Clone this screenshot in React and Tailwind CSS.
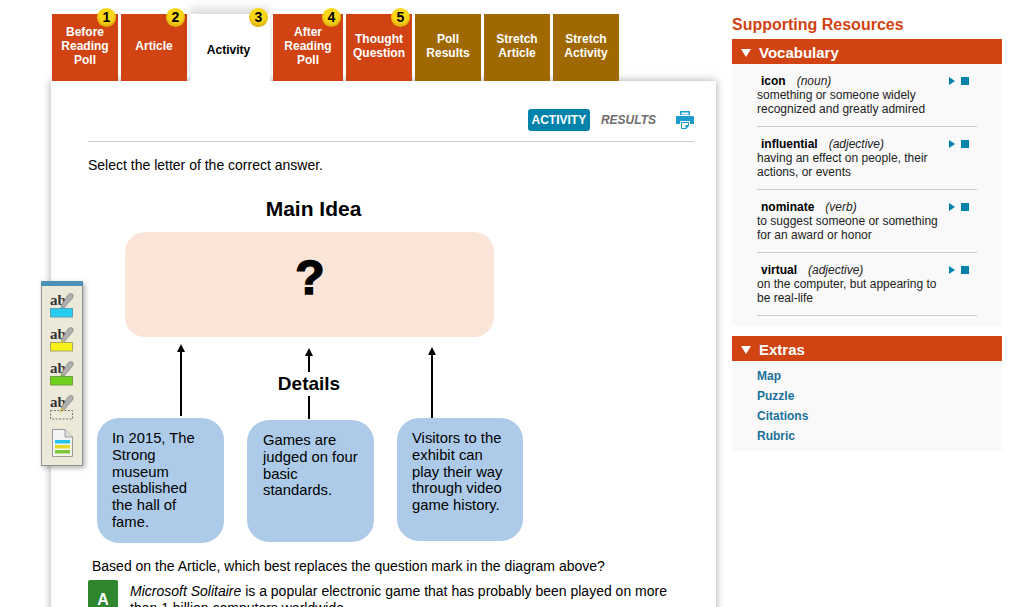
const tabs = [
  { label: ["Before", "Reading", "Poll"], w: "w-[66px]", bg: "bg-[#d14312]", badge: "1" },
  { label: ["Article"], w: "w-[66px]", bg: "bg-[#d14312]", badge: "2" },
  { label: ["Activity"], w: "w-[80px]", active: true, badge: "3" },
  { label: ["After", "Reading", "Poll"], w: "w-[70px]", bg: "bg-[#d14312]", badge: "4" },
  { label: ["Thought", "Question"], w: "w-[66px]", bg: "bg-[#d14312]", badge: "5" },
  { label: ["Poll", "Results"], w: "w-[66px]", bg: "bg-[#a06800]" },
  { label: ["Stretch", "Article"], w: "w-[66px]", bg: "bg-[#a06800]" },
  { label: ["Stretch", "Activity"], w: "w-[66px]", bg: "bg-[#a06800]" },
]

const vocab = [
  { word: "icon", pos: "(noun)", def: ["something or someone widely", "recognized and greatly admired"] },
  { word: "influential", pos: "(adjective)", def: ["having an effect on people, their", "actions, or events"] },
  { word: "nominate", pos: "(verb)", def: ["to suggest someone or something", "for an award or honor"] },
  { word: "virtual", pos: "(adjective)", def: ["on the computer, but appearing to", "be real-life"] },
]

const Tab = ({ tab }) => (
  <div
    className={`relative h-[67px] ${tab.w} flex items-center justify-center text-center text-[12px] leading-[14px] font-bold ${
      tab.active
        ? "bg-white text-black pt-[4px] pr-[3px] shadow-[0_-6px_8px_rgba(0,0,0,0.14)]"
        : `${tab.bg} text-white pb-[4px]`
    }`}
  >
    <div>
      {tab.label.map((line) => (
        <div key={line}>{line}</div>
      ))}
    </div>
    {tab.badge && (
      <div className="absolute right-[2px] top-[-6px] w-[19px] h-[19px] rounded-full bg-[radial-gradient(circle_at_50%_35%,#fbd716_45%,#c88c00_100%)] text-black text-[14px] leading-[19px] font-bold text-center">
        {tab.badge}
      </div>
    )}
  </div>
)

const PrintIcon = () => (
  <svg width="18" height="18" viewBox="0 0 18 18" fill="#1f9ccb">
    <path d="M4 0h10v4H4zM5.500 1.500v2h7v-2z" fillRule="evenodd" />
    <path d="M1 5h16a1 1 0 0 1 1 1v7h-4v-3H4v3H0V6a1 1 0 0 1 1-1z" />
    <path d="M5 11h8v4l-3 3H5zM6 12v5h3.500v-3H12v-2z" fillRule="evenodd" />
  </svg>
)

const Arrow = ({ x, top, height }) => (
  <div className="absolute flex flex-col items-center w-[9px]" style={{ left: x - 4, top, height }}>
    <div className="w-0 h-0 border-x-[4px] border-x-transparent border-b-[8px] border-b-black" />
    <div className="w-[2px] flex-1 bg-black" />
  </div>
)

const HighlightIcon = ({ fill, stroke, dashed, nib }) => (
  <svg width="24" height="26" viewBox="0 0 24 26">
    <text x="0" y="12" fontFamily="'Liberation Serif', serif" fontWeight="700" fontSize="15" fill="#333">
      ab
    </text>
    <path d="M11 13 L18 2 Q20 -0.500 22.500 1 Q24 2.500 22.500 5 L14 15 Z" fill="#b0b0b0" stroke="#777" strokeWidth="0.6" />
    <path d="M11 13 L14 15 L10 18 Z" fill={nib} />
    <rect
      x="0.500"
      y="15.500"
      width="22"
      height="8.500"
      fill={dashed ? "none" : fill}
      stroke={stroke}
      strokeDasharray={dashed ? "2 1.500" : undefined}
    />
  </svg>
)

const NotesIcon = () => (
  <svg width="21" height="28" viewBox="0 0 21 28">
    <path d="M0.500 0.500H13L20.500 8V27.500H0.500Z" fill="#f4f4f4" stroke="#9a9a9a" />
    <path d="M13 0.500V8H20.500" fill="#ddd" stroke="#9a9a9a" />
    <rect x="3" y="11" width="15" height="3.500" fill="#27c3ea" />
    <rect x="3" y="16" width="15" height="3.500" fill="#e6d82a" />
    <rect x="3" y="21" width="15" height="3.500" fill="#7fc73a" />
  </svg>
)

const SectionHeader = ({ title }) => (
  <div className="h-[25px] bg-[#d14312] flex items-center text-white font-bold text-[15px] pl-[9px]">
    <span className="w-0 h-0 border-x-[5px] border-x-transparent border-t-[8px] border-t-white mr-[8px] mt-[2px]" />
    <span className="mt-[3px]">{title}</span>
  </div>
)

const Bubble = ({ className, children }) => (
  <div className={`absolute bg-[#adcbe9] rounded-[22px] text-[14.800px] leading-[16.800px] text-black ${className}`}>
    {children}
  </div>
)

export default function App() {
  return (
    <div
      className="relative w-[1025px] h-[607px] overflow-hidden bg-white flex text-black"
      style={{ fontFamily: "'Liberation Sans', Arial, sans-serif" }}
    >
      {/* left column */}
      <div className="ml-[51px] w-[665px] shrink-0">
        <div className="relative">
          <div className="absolute left-0 right-0 top-[81px] h-[600px] shadow-[0_0_8px_rgba(0,0,0,0.35)]" />
          <div className="relative pt-[14px] pl-[1px] flex gap-[3px]">
            {tabs.map((tab) => (
              <Tab key={tab.label.join(" ")} tab={tab} />
            ))}
          </div>
        </div>

        <div className="relative bg-white h-[526px] pl-[37px] pr-[22px]">
          <div className="flex items-center justify-end h-[61px] pt-[17px] border-b border-[#ccc]">
            <div className="bg-[#0082ab] text-white font-bold text-[12px] h-[22px] w-[62px] rounded-[3px] flex items-center justify-center">
              ACTIVITY
            </div>
            <div className="ml-[11px] mr-[20px] text-[#6d6d6d] font-bold italic text-[12px]">RESULTS</div>
            <PrintIcon />
          </div>

          <p className="mt-[14px] text-[14px] leading-[18px]">Select the letter of the correct answer.</p>

          {/* diagram */}
          <div className="relative h-[360px] mt-[29px]">
            <div className="absolute left-0 w-[442px] top-[-6px] text-center text-[21px] font-bold leading-[24px] pl-[9px]">
              Main Idea
            </div>
            <div className="absolute left-[37px] top-[29px] w-[369px] h-[105px] rounded-[20px] bg-[#fbe5d8] flex items-center justify-center text-[48px] font-bold leading-none">
              <span className="ml-[1px] mt-[-13px] [-webkit-text-stroke:1.500px_black]">?</span>
            </div>

            <Arrow x={92} top={141} height={72} />
            <Arrow x={220} top={145} height={24} />
            <div className="absolute left-[170px] w-[102px] top-[170px] text-center text-[19px] font-bold leading-[22px]">
              Details
            </div>
            <div className="absolute left-[220px] top-[193px] w-[2px] h-[23px] bg-black" />
            <Arrow x={343} top={144} height={71} />

            <Bubble className="left-[9px] top-[215px] w-[127px] h-[125px] pl-[15px] pt-[12px]">
              In 2015, The
              <br />
              Strong
              <br />
              museum
              <br />
              established
              <br />
              the hall of
              <br />
              fame.
            </Bubble>
            <Bubble className="left-[159px] top-[217px] w-[127px] h-[122px] pl-[16px] pt-[12px]">
              Games are
              <br />
              judged on four
              <br />
              basic
              <br />
              standards.
            </Bubble>
            <Bubble className="left-[309px] top-[215px] w-[126px] h-[123px] pl-[15px] pt-[12px]">
              Visitors to the
              <br />
              exhibit can
              <br />
              play their way
              <br />
              through video
              <br />
              game history.
            </Bubble>
          </div>

          <p className="mt-[-6px] ml-[4px] text-[14px] leading-[18px]">
            Based on the Article, which best replaces the question mark in the diagram above?
          </p>

          <div className="flex mt-[5px]">
            <div className="w-[30px] h-[40px] shrink-0 rounded-t-[2px] bg-[#2e862e] text-white font-bold text-[16px] flex items-center justify-center">
              A
            </div>
            <p className="ml-[12px] text-[14px] leading-[17px] w-[545px] pt-[3px]">
              <em>Microsoft Solitaire</em> is a popular electronic game that has probably been played on more than 1
              billion computers worldwide.
            </p>
          </div>
        </div>
      </div>

      {/* right column */}
      <div className="ml-[16px] w-[270px] shrink-0">
        <h2 className="mt-[15px] h-[24px] text-[16px] leading-[20px] font-bold text-[#d14312]">Supporting Resources</h2>
        <SectionHeader title="Vocabulary" />
        <div className="bg-[#f9f9f9] pl-[25px] pr-[25px] pb-[10px]">
          {vocab.map((item) => (
            <div key={item.word} className="relative pt-[10px] pb-[10px] border-b border-[#ccc] text-[12px] leading-[14px]">
              <div className="pl-[4px] text-[#222]">
                <span className="font-bold text-black">{item.word}</span>
                <em className="ml-[11px]">{item.pos}</em>
              </div>
              {item.def.map((line) => (
                <div key={line} className="text-[#222]">
                  {line}
                </div>
              ))}
              <div className="absolute right-[8px] top-[13px] flex items-center">
                <span className="w-0 h-0 border-y-[4px] border-y-transparent border-l-[6px] border-l-[#0082ab] mr-[6px]" />
                <span className="w-[8px] h-[8px] bg-[#0082ab]" />
              </div>
            </div>
          ))}
        </div>

        <div className="mt-[10px]">
          <SectionHeader title="Extras" />
          <div className="bg-[#f9f9f9] pl-[25px] py-[5px] text-[12px] leading-[20px] font-bold text-[#1c7199]">
            <div>Map</div>
            <div>Puzzle</div>
            <div>Citations</div>
            <div>Rubric</div>
          </div>
        </div>
      </div>

      {/* floating highlighter toolbar */}
      <div className="absolute left-[41px] top-[281px] w-[42px] h-[185px] bg-[#ece9d8] border border-[#8f8f8f] border-t-0 shadow-[2px_2px_5px_rgba(0,0,0,0.3)]">
        <div className="h-[5px] bg-[#4a90b8] -mx-[1px]" />
        <div className="flex flex-col items-center pt-[7px] gap-[8px]">
          <HighlightIcon fill="#27cdf0" stroke="#5aa0b5" nib="#4ab5c9" />
          <HighlightIcon fill="#f6f218" stroke="#a8a860" nib="#d8cf30" />
          <HighlightIcon fill="#6fd21e" stroke="#70a040" nib="#70b030" />
          <HighlightIcon dashed stroke="#777" nib="#e0c030" />
          <NotesIcon />
        </div>
      </div>
    </div>
  )
}
